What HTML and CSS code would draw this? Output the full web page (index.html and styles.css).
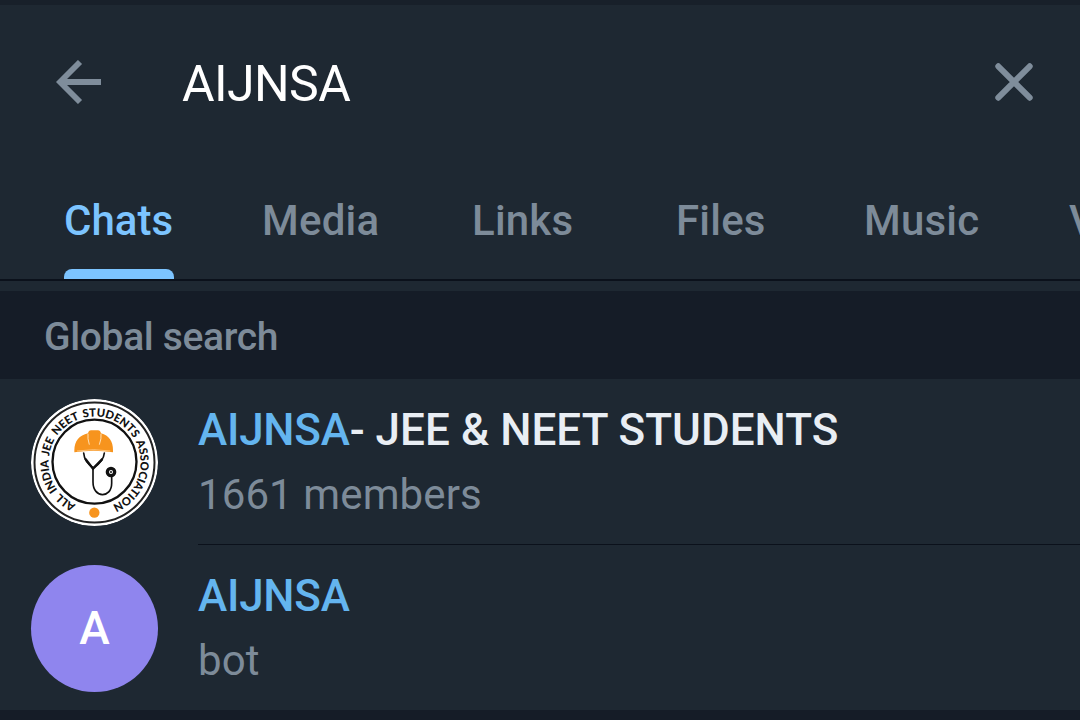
FILE: index.html
```html
<!DOCTYPE html>
<html lang="en">
<head>
  <meta charset="UTF-8" />
  <meta name="viewport" content="width=device-width, initial-scale=1.0"/>
  <title>Search</title>
  <link rel="stylesheet" href="styles.css">
</head>
<body>
  <!-- Search bar -->
  <header class="search-bar">
    <button class="icon-btn back-btn" aria-label="Back">
      <svg width="46" height="44" viewBox="0 0 46 44" fill="none" stroke="currentColor" stroke-width="5.8">
        <path d="M45 22H5M24 2L4 22l20 20"/>
      </svg>
    </button>
    <div class="query">AIJNSA</div>
    <button class="icon-btn clear-btn" aria-label="Clear">
      <svg width="38" height="38" viewBox="0 0 38 38" fill="none" stroke="currentColor" stroke-width="6" stroke-linecap="round">
        <path d="M3.3 3.3l31.4 31.4M34.7 3.3L3.3 34.7"/>
      </svg>
    </button>
  </header>

  <!-- Tabs -->
  <nav class="tabs">
    <a class="tab active">Chats</a>
    <a class="tab">Media</a>
    <a class="tab">Links</a>
    <a class="tab">Files</a>
    <a class="tab">Music</a>
    <a class="tab">V</a>
  </nav>

  <h2 class="section-title">Global search</h2>

  <!-- Results -->
  <ul class="results">
    <li class="result">
      <svg class="avatar" viewBox="33 27 381 381">
        <defs>
          <path id="ring" d="M167.5 343.5A138 138 0 1 1 273 346.3"/>
        </defs>
        <circle cx="223.5" cy="217.5" r="190.5" fill="#fff"/>
        <circle cx="223.5" cy="217.5" r="180" fill="none" stroke="#222" stroke-width="6"/>
        <circle cx="223.5" cy="215" r="126" fill="none" stroke="#111" stroke-width="7"/>
        <text class="ring-text"><textPath href="#ring" textLength="754">ALL INDIA JEE NEET STUDENTS ASSOCIATION</textPath></text>
        <circle cx="223" cy="368" r="15.5" fill="#f7941e"/>
        <g fill="none" stroke="#111" stroke-width="5" stroke-linecap="round">
          <path d="M191 189C193 213 205 224 220 234C238 223 251 211 253 189"/>
          <path d="M197 208L219 236L246 208" stroke-width="7"/>
          <path d="M219 236V276C219 326 275 326 275 280V262"/>
        </g>
        <circle cx="273" cy="246" r="11" fill="#fff" stroke="#111" stroke-width="10"/>
        <circle cx="273" cy="246" r="3" fill="#111"/>
        <path d="M163 181C163 153 178 136 204 130Q206 121 213 121H234Q241 121 243 130C267 137 279 153 279 181V187Q221 178 163 187Z" fill="#f7941e"/>
        <path d="M204 131Q202 145 208 164M243 131Q245 145 238 164" fill="none" stroke="#ffe0b5" stroke-width="3"/>
        <path d="M171 183Q221 175 271 183" fill="none" stroke="#ffd9a6" stroke-width="2"/>
      </svg>
      <div class="info">
        <div class="name"><span class="match">AIJNSA</span>- JEE &amp; NEET STUDENTS</div>
        <div class="status">1661 members</div>
      </div>
    </li>
    <li class="result">
      <div class="avatar letter">A</div>
      <div class="info">
        <div class="name"><span class="match">AIJNSA</span></div>
        <div class="status">bot</div>
      </div>
    </li>
  </ul>
</body>
</html>
```
FILE: styles.css
```css
* {
  margin: 0;
  padding: 0;
  box-sizing: border-box;
}

body {
  font-family: Roboto, sans-serif;
  width: 1080px;
  height: 720px;
  overflow: hidden;
  background-color: #151c27;
  color: #7d8b99;
}

.search-bar {
  display: flex;
  align-items: center;
  height: 160px;
  padding: 0 47px 2px 56px;
  border-top: 5px solid #18202a;
  background-color: #1e2832;
}

.icon-btn {
  display: flex;
  border: none;
  background: none;
  color: #7f8d9b;
}

.query {
  flex: 1;
  margin-left: 80px;
  padding-top: 4px;
  font-size: 50px;
  letter-spacing: -0.6px;
  line-height: 60px;
  color: #fff;
}

/* Tabs */
.tabs {
  display: grid;
  grid-template-columns: 198px 210px 204px 188px 205px 11px;
  justify-items: start;
  height: 131px;
  padding: 0 0 10px 64px;
  overflow: hidden;
  background-color: #1e2832;
  box-shadow: inset 0 -10px #1e2832, inset 0 -12px #0b111b;
  white-space: nowrap;
}

.tab {
  display: flex;
  flex-direction: column;
  justify-content: space-between;
  padding-top: 36px;
  font-size: 42px;
  font-weight: 500;
  letter-spacing: 0.2px;
  line-height: 50px;
}

.tab.active {
  width: 110px;
  letter-spacing: 0;
  color: #7cc4ff;
}

.tab.active::after {
  content: "";
  height: 10px;
  margin-bottom: 2px;
  border-radius: 8px 8px 0 0;
  background-color: #7cc4ff;
}

.section-title {
  height: 88px;
  padding-left: 44px;
  font-size: 39px;
  font-weight: 500;
  letter-spacing: -0.35px;
  line-height: 92px;
}

/* Results */
.results {
  list-style: none;
  height: 331px;
  background-color: #1e2832;
}

.result {
  display: flex;
  height: 166px;
  padding-left: 31px;
}

.avatar {
  flex: none;
  width: 127px;
  height: 127px;
  margin: 20px 40px 0 0;
  border-radius: 50%;
}

.letter {
  background-color: #8f85ee;
  color: #fff;
  font-size: 46px;
  font-weight: 500;
  line-height: 127px;
  text-align: center;
}

.ring-text {
  font-family: Lato, sans-serif;
  font-size: 34px;
  font-weight: 900;
  word-spacing: 5px;
  fill: #111;
}

.info {
  flex: 1;
  padding-top: 25px;
  border-bottom: 1px solid #0b111b;
}

.result:last-child .info {
  border-bottom: none;
}

.name {
  font-size: 44px;
  font-weight: 500;
  letter-spacing: 0.05px;
  line-height: 52px;
  color: #e9eef4;
}

.match {
  color: #64b5ef;
  letter-spacing: -0.25px;
}

.status {
  margin-top: 14px;
  font-size: 42px;
  letter-spacing: 0.1px;
  line-height: 50px;
}
```
